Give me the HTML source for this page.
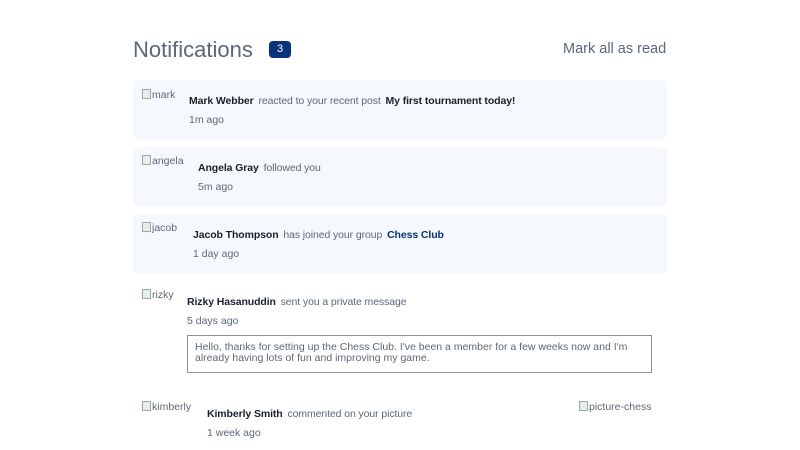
<!DOCTYPE html>
<html><head><meta charset="utf-8"><style>
body{margin:0;width:800px;height:450px;background:#fff;font-family:"Liberation Sans",sans-serif;position:relative;overflow:hidden}
.a{position:absolute;white-space:nowrap}
.card{position:absolute;left:133px;width:534px;height:60px;background:#f5f8fc;border-radius:6px}
.img{position:absolute;font-size:10.5px;color:#5e6778;white-space:nowrap}
.img:before{content:"";display:inline-block;width:7px;height:8px;border:1px solid #9aa;margin-right:1px;vertical-align:-1px;background:#e6efe6}
.t{position:absolute;font-size:10.5px;color:#5e6778;white-space:nowrap;letter-spacing:-0.1px}
.t b{color:#1c202b;margin-right:2px}
.t b.l{color:#0a327b}
.tm{position:absolute;font-size:10.5px;color:#5e6778}
</style></head><body>
<div class="a" style="left:133px;top:37px;font-size:22px;color:#5e6778">Notifications</div>
<div class="a" style="left:269px;top:41px;width:22px;height:17px;background:#0a327b;border-radius:4px;color:#fff;font-size:11px;text-align:center;line-height:17px">3</div>
<div class="a" style="left:563px;top:41px;font-size:14.5px;color:#5e6778">Mark all as read</div>

<div class="card" style="top:80px"></div>
<div class="img" style="left:142px;top:89px">mark</div>
<div class="t" style="left:189px;top:95px"><b>Mark Webber</b> reacted to your recent post <b style="margin-left:2px">My first tournament today!</b></div>
<div class="tm" style="left:189px;top:114px">1m ago</div>

<div class="card" style="top:147px"></div>
<div class="img" style="left:142px;top:155px">angela</div>
<div class="t" style="left:198px;top:162px"><b>Angela Gray</b> followed you</div>
<div class="tm" style="left:198px;top:181px">5m ago</div>

<div class="card" style="top:214px"></div>
<div class="img" style="left:142px;top:222px">jacob</div>
<div class="t" style="left:193px;top:229px"><b>Jacob Thompson</b> has joined your group <b class="l" style="margin-left:2px">Chess Club</b></div>
<div class="tm" style="left:193px;top:248px">1 day ago</div>

<div class="img" style="left:142px;top:289px">rizky</div>
<div class="t" style="left:187px;top:296px"><b>Rizky Hasanuddin</b> sent you a private message</div>
<div class="tm" style="left:187px;top:315px">5 days ago</div>
<div class="a" style="left:187px;top:335px;width:450px;height:24px;border:1px solid #8a8f98;padding:6px 6px 6px 7px;font-size:10.5px;line-height:11px;color:#5e6778;white-space:normal">Hello, thanks for setting up the Chess Club. I've been a member for a few weeks now and I'm already having lots of fun and improving my game.</div>

<div class="img" style="left:142px;top:401px">kimberly</div>
<div class="t" style="left:207px;top:408px"><b>Kimberly Smith</b> commented on your picture</div>
<div class="tm" style="left:207px;top:427px">1 week ago</div>
<div class="img" style="left:579px;top:401px">picture-chess</div>
</body></html>
